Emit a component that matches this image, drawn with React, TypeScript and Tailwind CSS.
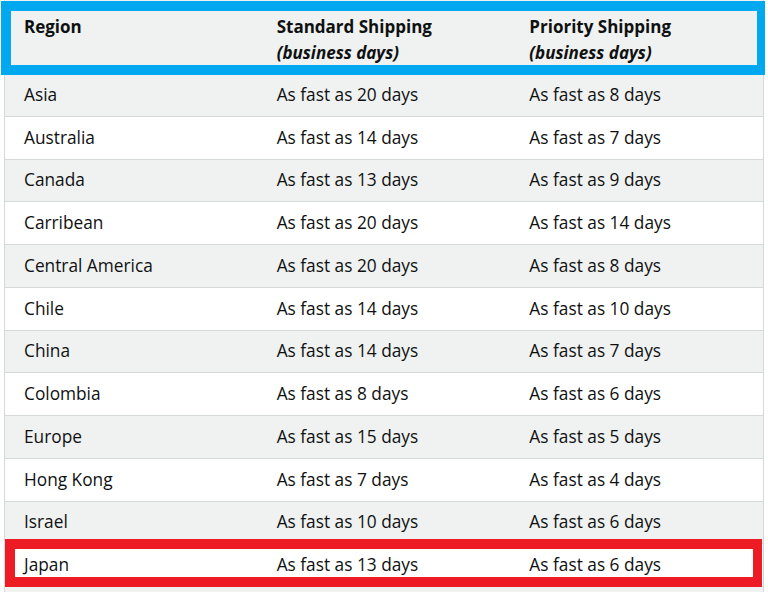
const rows: [string, string, string][] = [
  ["Asia", "As fast as 20 days", "As fast as 8 days"],
  ["Australia", "As fast as 14 days", "As fast as 7 days"],
  ["Canada", "As fast as 13 days", "As fast as 9 days"],
  ["Carribean", "As fast as 20 days", "As fast as 14 days"],
  ["Central America", "As fast as 20 days", "As fast as 8 days"],
  ["Chile", "As fast as 14 days", "As fast as 10 days"],
  ["China", "As fast as 14 days", "As fast as 7 days"],
  ["Colombia", "As fast as 8 days", "As fast as 6 days"],
  ["Europe", "As fast as 15 days", "As fast as 5 days"],
  ["Hong Kong", "As fast as 7 days", "As fast as 4 days"],
  ["Israel", "As fast as 10 days", "As fast as 6 days"],
  ["Japan", "As fast as 13 days", "As fast as 6 days"],
];

export default function App() {
  return (
    <div
      className="relative w-[768px] h-[592px] overflow-hidden bg-white text-[#0f1111] text-[17px]"
      style={{ fontFamily: '"Open Sans", "Noto Sans", sans-serif' }}
    >
      <div className="ml-[4px] w-[760px] border-x border-[#d5d9d9]">
        {/* Header */}
        <div className="grid grid-cols-3 h-[73px] bg-[#f0f2f2] pt-[14px] font-bold leading-[26px]">
          <div className="pl-[19px]">Region</div>
          <div className="pl-[19px]">
            Standard Shipping
            <br />
            <em>(business days)</em>
          </div>
          <div className="pl-[19px]">
            Priority Shipping
            <br />
            <em>(business days)</em>
          </div>
        </div>

        {/* Rows */}
        {rows.map((r, i) => (
          <div
            key={r[0]}
            className={`grid grid-cols-3 items-center h-[42.75px] border-t border-[#d5d9d9] text-[17.3px] ${
              i % 2 === 0 ? "bg-[#f0f2f2]" : "bg-white"
            }`}
          >
            <div className="pl-[19px]">{r[0]}</div>
            <div className="pl-[19px]">{r[1]}</div>
            <div className="pl-[19px]">{r[2]}</div>
          </div>
        ))}
        <div className="h-[20px] border-t border-[#d5d9d9] bg-[#f0f2f2]" />
      </div>

      {/* Highlight boxes */}
      <div className="absolute left-[1px] top-[1px] w-[764px] h-[74px] border-t-[10px] border-l-[10px] border-b-[10px] border-r-[8px] border-[#00a8f0]" />
      <div className="absolute left-[5px] top-[539px] w-[757px] h-[48px] border-[10px] border-r-[9px] border-[#ed1c24]" />
    </div>
  );
}
